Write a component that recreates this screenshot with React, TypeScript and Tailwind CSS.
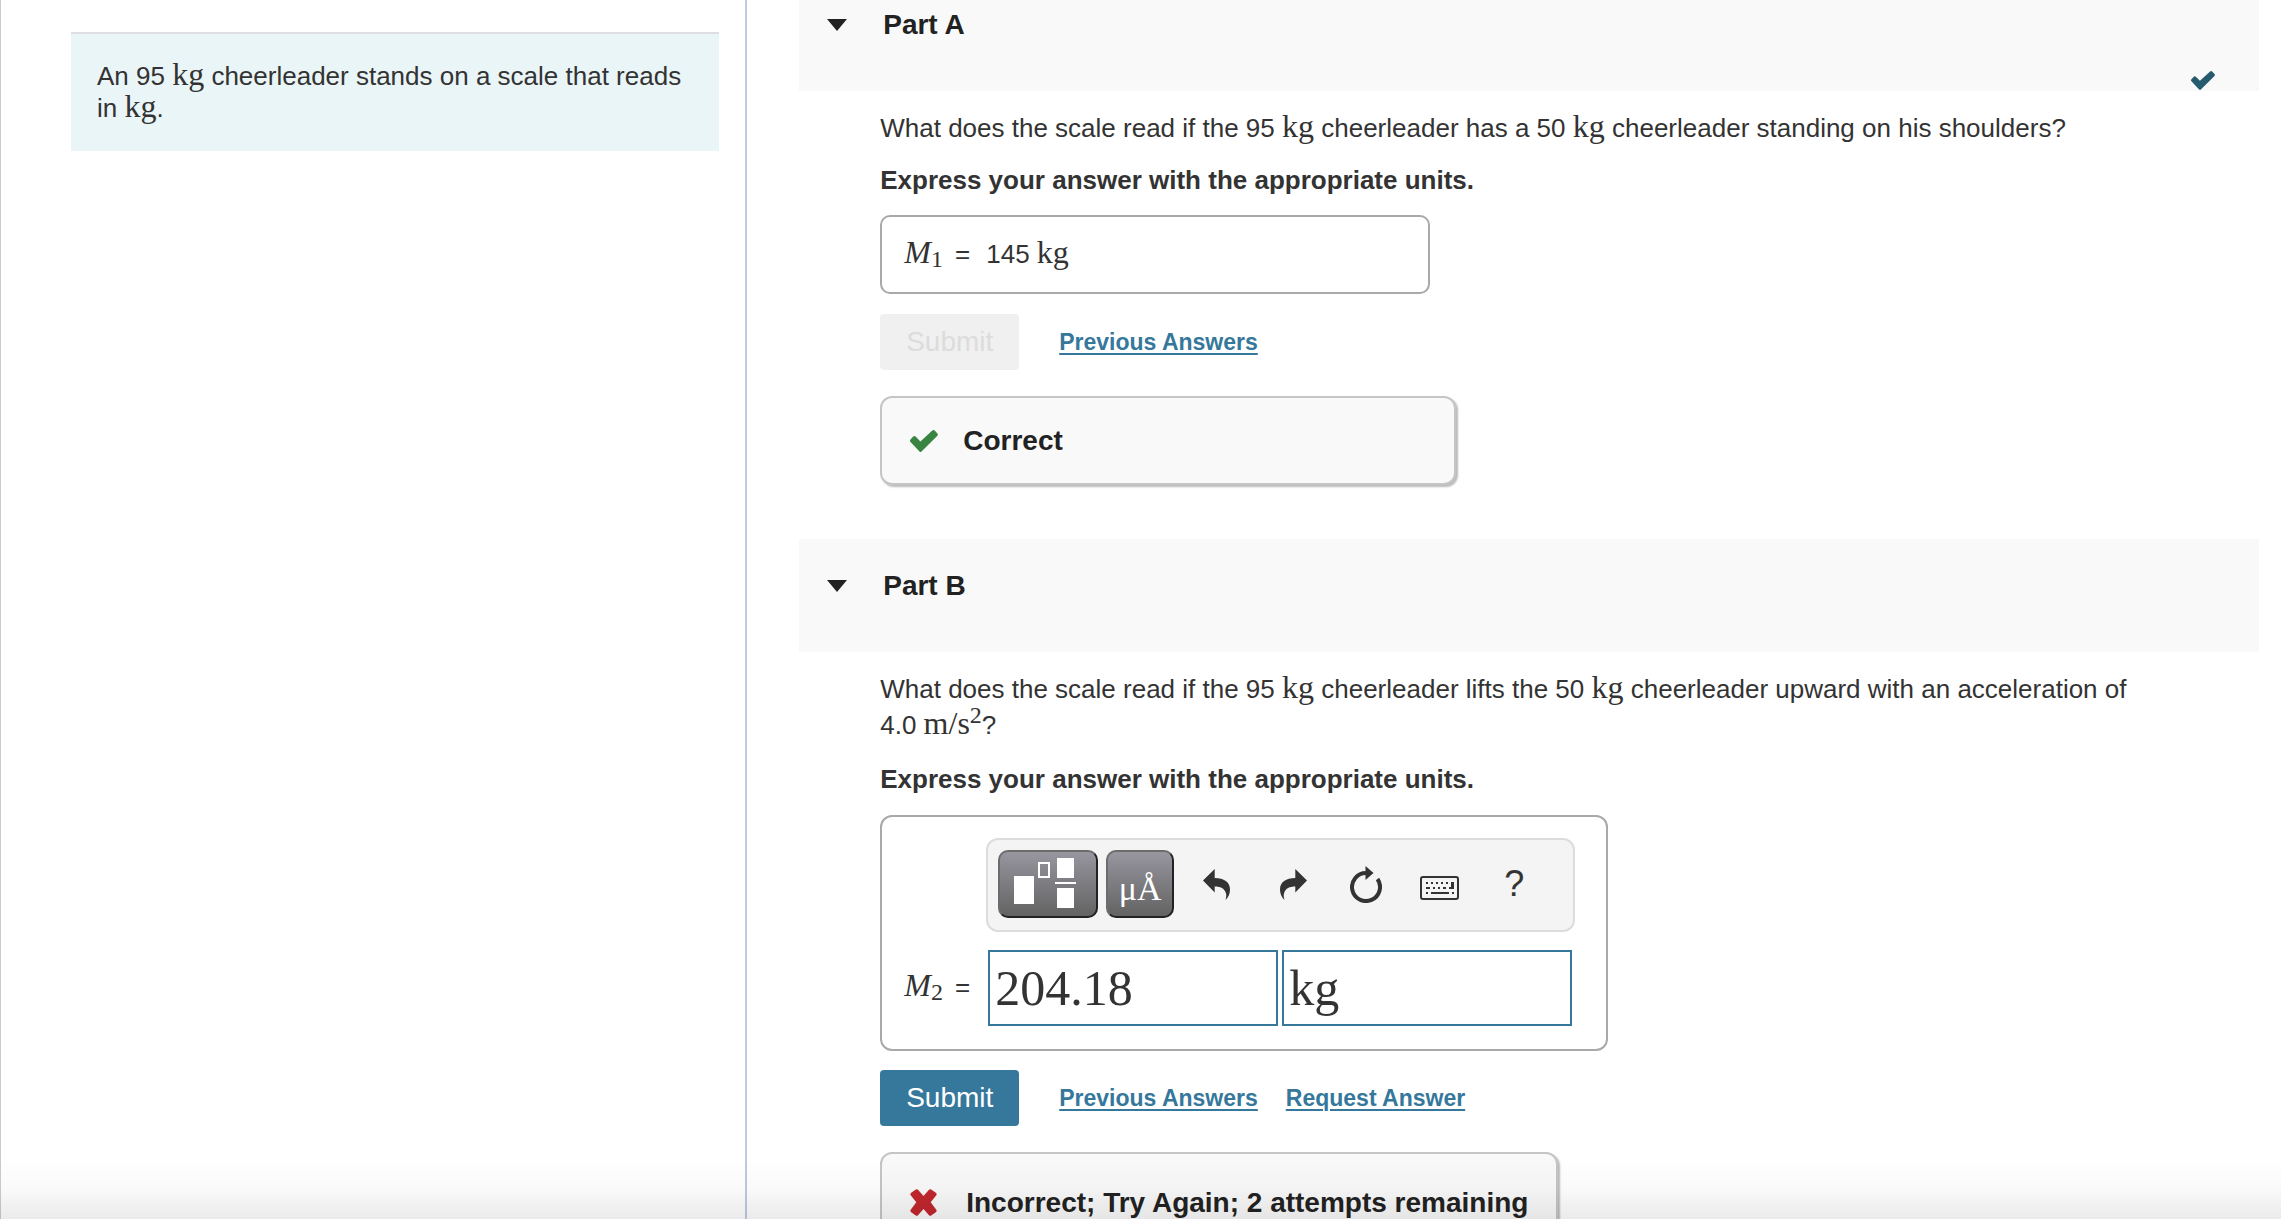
import { useState } from "react";
import type { ReactNode } from "react";

type ChildrenProps = {
  children: ReactNode;
};

function Unit({ children }: ChildrenProps) {
  return (
    <span className="font-['Liberation_Serif',serif] text-[32px] leading-7 whitespace-nowrap">
      {children}
    </span>
  );
}

function Variable({ name, index }: { name: string; index: number }) {
  return (
    <span className="font-['Liberation_Serif',serif] text-[32px] leading-none">
      <i>{name}</i>
      <sub className="bottom-[-4px] text-2xl">{index}</sub>
    </span>
  );
}

function CheckIcon({ className }: { className: string }) {
  return (
    <svg
      viewBox="0 0 28 22"
      preserveAspectRatio="none"
      className={className}
      aria-hidden="true"
    >
      <path
        d="M0.500 9.500 3.200 6.600q1.200-1 2.400 0l4.800 4.800L22.300 0.600q1.200-1 2.400 0l2.700 2.800q1 1.200 0 2.400L11.500 21.400q-1 1-2 0L0.500 12q-1-1.300 0-2.500z"
        fill="currentColor"
      />
    </svg>
  );
}

function CrossIcon({ className }: { className: string }) {
  return (
    <svg viewBox="0 0 27 27" className={className} aria-hidden="true">
      <path
        d="M8 0.800 13.500 7 19 0.800q1-1 2.200-.3l4.600 3.200q1.400 1.200.5 2.600L20.700 13.300l5.600 7.400q.9 1.400-.5 2.600l-4.600 3.200q-1.200.7-2.200-.3l-5.500-6.300-5.500 6.300q-1 1-2.200.3l-4.600-3.200q-1.400-1.200-.5-2.600l5.600-7.400L.7 6.300Q-.2 4.900 1.200 3.700L5.800.5Q7-.2 8 .8z"
        fill="currentColor"
      />
    </svg>
  );
}

function UndoIcon({ className }: { className: string }) {
  return (
    <svg viewBox="0 0 27 31" className={className} aria-hidden="true">
      <path
        d="M0 11.500 11.700 0v9C21 9 27 13 27 20.500c0 4-1.500 7.500-4.500 10.500.9-3 1.100-5.500.2-7.500-1.500-4-5-6-11-6v6z"
        fill="currentColor"
      />
    </svg>
  );
}

function ResetIcon() {
  return (
    <svg viewBox="0 0 32 37" className="h-[37px] w-8" aria-hidden="true">
      <path
        d="M16 7A14 14 0 1 0 27.500 13"
        fill="none"
        stroke="currentColor"
        strokeWidth="4"
      />
      <path d="M15.500 0 23.500 7 15.500 14z" fill="currentColor" />
    </svg>
  );
}

function KeyboardIcon() {
  return (
    <svg viewBox="0 0 39 24" className="h-6 w-[39px]" aria-hidden="true">
      <rect
        x="1"
        y="1"
        width="37"
        height="22"
        rx="2"
        fill="none"
        stroke="currentColor"
        strokeWidth="2"
      />
      <path
        d="M6 6h2v2H6zM11 6h2v2h-2zM16 6h2v2h-2zM21 6h2v2h-2zM26 6h2v2h-2zM31 6h3v7h-5v-2h2zM6 11h4v2H6zM13 11h2v2h-2zM18 11h2v2h-2zM23 11h3v2h-3zM6 16h2v2H6zM11 16h18v2H11zM32 16h2v2h-2z"
        fill="currentColor"
      />
    </svg>
  );
}

function TemplateIcon() {
  return (
    <svg viewBox="0 0 62 50" className="h-[50px] w-[62px]" aria-hidden="true">
      <g fill="#fff">
        <rect x="0" y="18" width="20" height="28" />
        <rect x="43" y="0" width="17" height="20" />
        <rect x="41" y="24" width="21" height="2" />
        <rect x="43" y="30" width="17" height="20" />
      </g>
      <rect
        x="25"
        y="5"
        width="10"
        height="14"
        fill="none"
        stroke="#fff"
        strokeWidth="2"
      />
    </svg>
  );
}

function PartHeader({ title, done }: { title: string; done?: boolean }) {
  return (
    <header
      className={`flex justify-between bg-[#f9f9f9] pr-[44px] pl-[27px] ${
        done ? "h-[91px] pt-[9px]" : "h-[113px] pt-[31px]"
      }`}
    >
      <button type="button" className="flex h-8 items-center gap-[35px]">
        <svg viewBox="0 0 22 12" className="h-3 w-[22px]" aria-hidden="true">
          <path d="M1 0h20L11 12z" fill="#222" />
        </svg>
        <h2 className="text-[28px] leading-8 font-bold text-[#222]">{title}</h2>
      </button>
      {done && (
        <CheckIcon className="mb-[1px] h-[19px] w-6 self-end text-[#265a6e]" />
      )}
    </header>
  );
}

function AnswerLink({ children }: ChildrenProps) {
  return (
    <a
      href="#"
      className="text-[23px] leading-7 font-bold text-[#35789b] underline decoration-2 underline-offset-3"
    >
      {children}
    </a>
  );
}

function Feedback({ children, size }: ChildrenProps & { size: string }) {
  return (
    <div
      className={`flex items-center rounded-xl border-2 border-[#c5c5c5] bg-[#f9f9f9] pl-7 text-[28px] leading-8 font-bold text-[#222] shadow-[2px_2px_2px_#bbb] ${size}`}
    >
      {children}
    </div>
  );
}

const iconButton = "flex h-[68px] items-center justify-center";
const darkButton =
  "rounded-[10px] border-2 border-t-[#6c6c6c] border-r-[#222] border-b-[#222] border-l-[#6c6c6c] bg-linear-to-b from-[#98969f] to-[#636363] text-white";

function Toolbar() {
  return (
    <div
      role="toolbar"
      className="flex h-[94px] w-[589px] items-center rounded-xl border-2 border-[#dcdcdc] bg-[#f4f4f4] pb-[2px] pl-[10px]"
    >
      <button
        type="button"
        aria-label="Templates"
        className={`${iconButton} ${darkButton} mr-2 w-[100px] pr-[6px] pb-[2px]`}
      >
        <TemplateIcon />
      </button>
      <button
        type="button"
        aria-label="Symbols"
        className={`${iconButton} ${darkButton} w-[68px] pt-2 font-['Liberation_Serif',serif] text-[34px]`}
      >
        μÅ
      </button>
      <button type="button" aria-label="Undo" className={`${iconButton} ml-[29px]`}>
        <UndoIcon className="h-[31px] w-[27px]" />
      </button>
      <button type="button" aria-label="Redo" className={`${iconButton} ml-[50px]`}>
        <UndoIcon className="h-[31px] w-[27px] -scale-x-100" />
      </button>
      <button type="button" aria-label="Reset" className={`${iconButton} ml-[43px]`}>
        <ResetIcon />
      </button>
      <button
        type="button"
        aria-label="Keyboard shortcuts"
        className={`${iconButton} ml-[38px] pt-2`}
      >
        <KeyboardIcon />
      </button>
      <button
        type="button"
        aria-label="Help"
        className={`${iconButton} ml-[45px] text-[36px]`}
      >
        ?
      </button>
    </div>
  );
}

const field =
  "h-[76px] w-[290px] border-2 border-[#35789b] px-[5px] font-['Liberation_Serif',serif] text-[50px] outline-none";

function AnswerEntry() {
  const [value, setValue] = useState("204.18");
  const [units, setUnits] = useState("kg");

  return (
    <div className="mt-[18px] w-[728px] rounded-xl border-2 border-[#a9a9a9] px-[22px] pt-[21px] pb-[23px]">
      <div className="ml-[82px]">
        <Toolbar />
      </div>
      <div className="mt-[18px] flex items-center">
        <label
          htmlFor="value"
          className="flex w-[84px] items-baseline gap-3 pb-[3px]"
        >
          <Variable name="M" index={2} />
          <span className="text-[26px] leading-none">=</span>
        </label>
        <input
          id="value"
          type="text"
          className={field}
          value={value}
          onChange={(e) => setValue(e.target.value)}
        />
        <input
          type="text"
          aria-label="Units"
          className={`${field} ml-1`}
          value={units}
          onChange={(e) => setUnits(e.target.value)}
        />
      </div>
    </div>
  );
}

function PartA() {
  return (
    <section>
      <PartHeader title="Part A" done />
      <div className="pt-[19px] pr-[21px] pb-[54px] pl-[81px]">
        <p className="leading-9">
          What does the scale read if the 95 <Unit>kg</Unit> cheerleader has a 50{" "}
          <Unit>kg</Unit> cheerleader standing on his shoulders?
        </p>
        <p className="mt-4 leading-9 font-bold">
          Express your answer with the appropriate units.
        </p>
        <div className="mt-[17px] flex h-[79px] w-[550px] items-center rounded-[10px] border-2 border-[#a9a9a9] px-[22px]">
          <div className="flex items-baseline">
            <span className="flex w-[82px] items-baseline gap-3">
              <Variable name="M" index={1} />
              <span className="text-[26px] leading-none">=</span>
            </span>
            <span>
              145 <Unit>kg</Unit>
            </span>
          </div>
        </div>
        <div className="mt-5 flex items-center gap-10">
          <button
            type="button"
            disabled
            className="h-14 w-[139px] rounded-[4px] bg-[#f0f0f0] text-[28px] text-[#dcdcdc]"
          >
            Submit
          </button>
          <AnswerLink>Previous Answers</AnswerLink>
        </div>
        <div className="mt-[26px]">
          <Feedback size="h-[89px] w-[576px]">
            <CheckIcon className="mr-[25px] h-[22px] w-7 text-[#3a8442]" />
            Correct
          </Feedback>
        </div>
      </div>
    </section>
  );
}

function PartB() {
  return (
    <section>
      <PartHeader title="Part B" />
      <div className="pt-[19px] pr-[21px] pl-[81px]">
        <p className="leading-9">
          What does the scale read if the 95 <Unit>kg</Unit> cheerleader lifts the
          50 <Unit>kg</Unit> cheerleader upward with an acceleration of{" "}
          <span className="whitespace-nowrap">
            4.0{" "}
            <Unit>
              m/s<sup className="top-[-11px] text-2xl">2</sup>
            </Unit>
            ?
          </span>
        </p>
        <p className="mt-[18px] leading-9 font-bold">
          Express your answer with the appropriate units.
        </p>
        <AnswerEntry />
        <div className="mt-[19px] flex items-center gap-7">
          <button
            type="button"
            className="mr-3 h-14 w-[139px] rounded-[4px] bg-[#35789b] text-[28px] text-white"
          >
            Submit
          </button>
          <AnswerLink>Previous Answers</AnswerLink>
          <AnswerLink>Request Answer</AnswerLink>
        </div>
        <div className="mt-[26px]">
          <Feedback size="h-[101px] w-[678px]">
            <CrossIcon className="mr-[29px] h-[27px] w-[27px] text-[#c1272d]" />
            Incorrect; Try Again; 2 attempts remaining
          </Feedback>
        </div>
      </div>
    </section>
  );
}

export default function App() {
  return (
    <div className="relative grid h-screen grid-cols-[19fr_39fr] overflow-hidden bg-white font-['Liberation_Sans',Arial,sans-serif] text-[26px] text-[#333]">
      <aside className="border-r-2 border-l border-r-[#bccbdd] border-l-[#ccc] pt-8 pr-[26px] pl-[70px]">
        <p className="border-t-2 border-[#dedde1] bg-[#eaf5f7] px-[26px] pt-[26px] pb-[27px] leading-8">
          An 95 <Unit>kg</Unit> cheerleader stands on a scale that reads in{" "}
          <Unit>kg</Unit>.
        </p>
      </aside>
      <main className="min-w-0 overflow-hidden pr-[22px] pl-[52px]">
        <PartA />
        <PartB />
      </main>
      {/* fade along the bottom edge of the scroll area */}
      <div className="pointer-events-none absolute inset-x-0 bottom-0 h-16 bg-linear-to-b from-transparent via-black/2 to-black/8" />
    </div>
  );
}
